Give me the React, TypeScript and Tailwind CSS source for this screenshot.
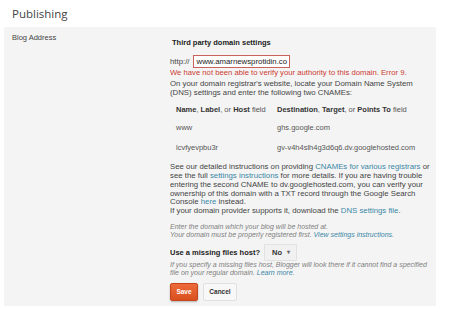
const link = "text-[#3a87a6]";

export default function App() {
  return (
    <div className="w-[474px] h-[313px] overflow-hidden bg-white font-['Liberation_Sans',Arial,sans-serif] text-[7.5px] text-[#333]">
      <h1 className="h-[27px] pl-[12px] pt-[6px] font-['Open_Sans',sans-serif] text-[11.5px] leading-[16px] text-[#444]">
        Publishing
      </h1>

      <div className="ml-[4px] flex h-[279px] w-[432px] bg-[#f4f4f4]">
        <div className="w-[166px] pl-[8px] pt-[6px] leading-[9px] text-[#444]">Blog Address</div>

        <div className="flex-1 whitespace-nowrap pt-[11px]">
          <div className="pl-[2px] font-bold leading-[9px] text-[#222]">Third party domain settings</div>

          <div className="mt-[8px] flex h-[13px] items-center gap-[3px] text-[7.8px]">
            <span className="text-[#444]">http://</span>
            <div className="flex h-[13px] w-[97px] items-center overflow-hidden border border-[#c9625a] bg-white pl-[3px] text-[#222]">
              www.amarnewsprotidin.co
            </div>
          </div>

          <p className="text-[7.7px] leading-[9px] text-[#cc3a32]">
            We have not been able to verify your authority to this domain. Error 9.
          </p>

          <p className="mt-[3px] text-[7.8px] leading-[8.7px] text-[#444]">
            On your domain registrar's website, locate your Domain Name System
            <br />
            (DNS) settings and enter the following two CNAMEs:
          </p>

          <div className="mt-[3px] pl-[6px] text-[#555]">
            <div className="flex h-[18px] items-center">
              <span className="w-[101px]">
                <b className="text-[#333]">Name</b>, <b className="text-[#333]">Label</b>, or{" "}
                <b className="text-[#333]">Host</b> field
              </span>
              <span>
                <b className="text-[#333]">Destination</b>, <b className="text-[#333]">Target</b>, or{" "}
                <b className="text-[#333]">Points To</b> field
              </span>
            </div>
            <div className="flex h-[18px] items-center">
              <span className="w-[101px]">www</span>
              <span>ghs.google.com</span>
            </div>
            <div className="flex h-[22px] items-center">
              <span className="w-[101px]">lcvfyevpbu3r</span>
              <span>gv-v4h4slh4g3d6q6.dv.googlehosted.com</span>
            </div>
          </div>

          <p className="mt-[5px] text-[7.8px] leading-[8.7px] text-[#444]">
            See our detailed instructions on providing <span className={link}>CNAMEs for various registrars</span> or
            <br />
            see the full <span className={link}>settings instructions</span> for more details. If you are having trouble
            <br />
            entering the second CNAME to dv.googlehosted.com, you can verify your
            <br />
            ownership of this domain with a TXT record through the Google Search
            <br />
            Console <span className={link}>here</span> instead.
            <br />
            If your domain provider supports it, download the <span className={link}>DNS settings file</span>.
          </p>

          <p className="mt-[7px] text-[7px] italic leading-[8px] text-[#808080]">
            Enter the domain which your blog will be hosted at.
            <br />
            Your domain must be properly registered first. <span className={link}>View settings instructions</span>.
          </p>

          <div className="mt-[5px] flex h-[17px] items-center gap-[4px]">
            <span className="font-bold text-[#222]">Use a missing files host?</span>
            <div className="flex h-[17px] w-[33px] items-center gap-[5px] rounded-[1px] border border-[#e2e2e2] bg-[#f1f1f1] pl-[7px] font-bold text-[#333]">
              No
              <span className="text-[6px] text-[#666]">▾</span>
            </div>
          </div>

          <p className="text-[7px] italic leading-[8px] text-[#808080]">
            If you specify a missing files host, Blogger will look there if it cannot find a specified
            <br />
            file on your regular domain. <span className={link}>Learn more</span>.
          </p>

          <div className="mt-[6px] flex gap-[5px]">
            <button className="h-[18px] w-[28px] rounded-[2px] border border-[#c4441b] bg-gradient-to-b from-[#ee6a39] to-[#d9501f] text-[6.5px] font-bold text-white shadow-[0_1px_2px_rgba(0,0,0,0.25)]">
              Save
            </button>
            <button className="h-[18px] w-[34px] rounded-[2px] border border-[#e0e0e0] bg-[#f8f8f8] text-[6.5px] font-bold text-[#333]">
              Cancel
            </button>
          </div>
        </div>
      </div>
    </div>
  );
}
